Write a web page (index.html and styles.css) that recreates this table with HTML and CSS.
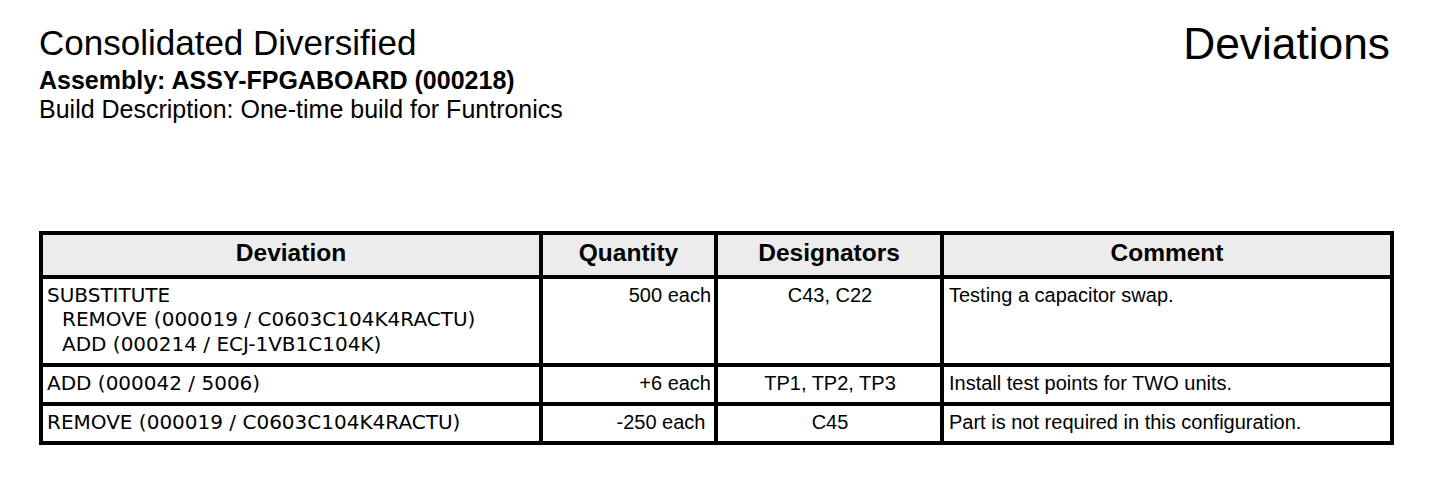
FILE: index.html
```html
<!DOCTYPE html>
<html lang="en">
<head>
<meta charset="utf-8">
<title>Deviations</title>
<link rel="stylesheet" href="styles.css">
</head>
<body>
<header class="page-head">
  <div class="head-left">
    <div class="company">Consolidated Diversified</div>
    <div class="assembly">Assembly: ASSY-FPGABOARD (000218)</div>
    <div class="build">Build Description: One-time build for Funtronics</div>
  </div>
  <h1 class="doc-title">Deviations</h1>
</header>

<div class="dev-table">
  <div class="th">Deviation</div>
  <div class="th">Quantity</div>
  <div class="th">Designators</div>
  <div class="th">Comment</div>

  <div class="td dev">
    <div>SUBSTITUTE</div>
    <div class="sub">REMOVE (000019 / C0603C104K4RACTU)</div>
    <div class="sub">ADD (000214 / ECJ-1VB1C104K)</div>
  </div>
  <div class="td qty">500 each</div>
  <div class="td des">C43, C22</div>
  <div class="td com">Testing a capacitor swap.</div>

  <div class="td dev">ADD (000042 / 5006)</div>
  <div class="td qty">+6 each</div>
  <div class="td des">TP1, TP2, TP3</div>
  <div class="td com">Install test points for TWO units.</div>

  <div class="td dev">REMOVE (000019 / C0603C104K4RACTU)</div>
  <div class="td qty">-250 each&nbsp;</div>
  <div class="td des">C45</div>
  <div class="td com">Part is not required in this configuration.</div>
</div>
</body>
</html>
```

FILE: styles.css
```css
html, body {
  margin: 0;
  padding: 0;
  background: #ffffff;
  color: #000000;
  font-family: "Liberation Sans", Arial, sans-serif;
}

.page-head {
  display: flex;
  justify-content: space-between;
  align-items: flex-start;
  padding: 20px 40px 0 39px;
}

.head-left {
  padding-top: 2px;
}

.company {
  font-size: 35px;
  line-height: 42px;
}

.assembly {
  font-size: 25px;
  line-height: 32px;
  font-weight: bold;
}

.build {
  font-size: 25px;
  line-height: 27px;
}

.doc-title {
  margin: 0;
  font-size: 44.3px;
  line-height: 48px;
  font-weight: normal;
}

.dev-table {
  display: grid;
  grid-template-columns: 496px 171px 222px 446px;
  gap: 4px;
  padding: 4px;
  background: #000000;
  width: max-content;
  margin: 108px 0 0 39px;
}

.th {
  background: #ececec;
  font-weight: bold;
  font-size: 24.5px;
  line-height: 35px;
  padding-bottom: 5px;
  text-align: center;
}

.td {
  background: #ffffff;
  font-size: 20px;
  line-height: 24px;
  padding: 4px 3px 7px 5px;
}

.dev {
  font-family: "DejaVu Sans", Verdana, sans-serif;
  padding-left: 4px;
}

.sub {
  padding-left: 15px;
  line-height: 24.5px;
}

.qty {
  text-align: right;
}

.des {
  text-align: center;
}

.com {
  text-align: left;
}
```
